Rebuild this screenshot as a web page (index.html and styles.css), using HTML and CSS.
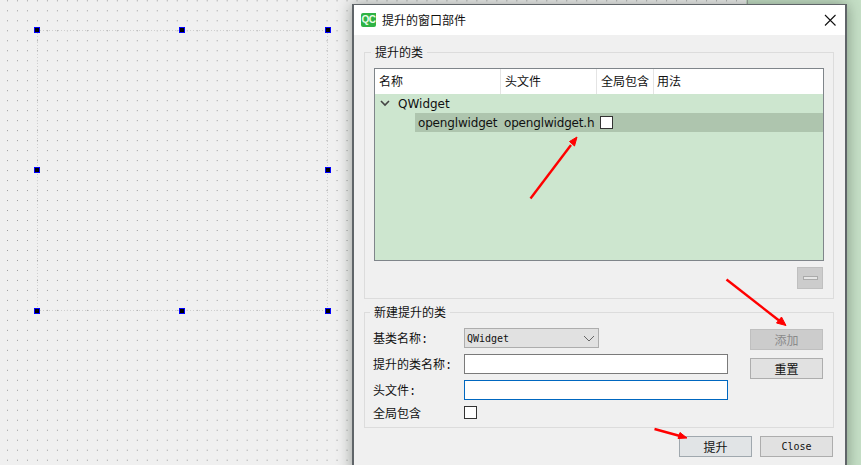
FILE: index.html
```html
<!DOCTYPE html>
<html lang="zh">
<head>
<meta charset="utf-8">
<title>提升的窗口部件</title>
<link rel="stylesheet" href="styles.css">
</head>
<body>
<svg class="canvas" width="748" height="465" viewBox="0 0 748 465" shape-rendering="crispEdges">
  <defs>
    <pattern id="dots" width="10" height="10" patternUnits="userSpaceOnUse" x="7" y="0">
      <rect width="1" height="1" fill="#9a9a9a"/>
    </pattern>
  </defs>
  <rect width="747" height="465" fill="#f0f0f0"/>
  <rect width="747" height="465" fill="url(#dots)"/>
  <g stroke="#cfcfcf" stroke-dasharray="1 2" fill="none">
    <path d="M40 30.5H325M40 310.5H325M37.500 33V308M327.500 33V308"/>
  </g>
  <g fill="#000" stroke="#0000ff">
    <rect x="34.500" y="27.500" width="5" height="5"/>
    <rect x="179.500" y="27.500" width="5" height="5"/>
    <rect x="325.500" y="27.500" width="5" height="5"/>
    <rect x="34.500" y="167.500" width="5" height="5"/>
    <rect x="325.500" y="167.500" width="5" height="5"/>
    <rect x="34.500" y="308.500" width="5" height="5"/>
    <rect x="179.500" y="308.500" width="5" height="5"/>
    <rect x="325.500" y="308.500" width="5" height="5"/>
  </g>
</svg>

<section class="dialog">
  <header class="titlebar">
    <span class="qt-logo">QC</span>
    <span class="title-text">提升的窗口部件</span>
    <svg class="close-icon" width="14" height="14" viewBox="0 0 14 14"><path d="M2 2L12.500 12.500M12.500 2L2 12.500" stroke="#111" stroke-width="1.100" fill="none"/></svg>
  </header>
  <div class="dialog-body">
    <fieldset class="group group-list">
      <legend>提升的类</legend>
      <div class="tree">
        <div class="tree-head">
          <span class="col col-name">名称</span>
          <span class="col col-file">头文件</span>
          <span class="col col-global">全局包含</span>
          <span class="col col-usage">用法</span>
        </div>
        <div class="tree-parent">
          <svg class="chevron" width="10" height="7" viewBox="0 0 10 7"><path d="M1 1L5 5L9 1" stroke="#444" stroke-width="1.600" fill="none"/></svg>
          <span>QWidget</span>
        </div>
        <div class="tree-child">
          <span class="child-name">openglwidget</span>
          <span class="child-file">openglwidget.h</span>
          <span class="check"></span>
        </div>
      </div>
      <div class="remove-row">
        <button class="btn-remove" type="button" aria-label="移除"><span class="minus"></span></button>
      </div>
    </fieldset>

    <fieldset class="group group-new">
      <legend>新建提升的类</legend>
      <div class="new-layout">
        <div class="form">
          <label class="form-label">基类名称:</label>
          <div class="combo"><span>QWidget</span>
            <svg width="12" height="7" viewBox="0 0 12 7"><path d="M1 1L6 6L11 1" stroke="#666" fill="none"/></svg>
          </div>
          <label class="form-label">提升的类名称:</label>
          <div class="input"></div>
          <label class="form-label">头文件:</label>
          <div class="input input-focus"></div>
          <label class="form-label form-label-short">全局包含</label>
          <div class="check-cell"><span class="check"></span></div>
        </div>
        <div class="side-buttons">
          <button class="btn btn-disabled" type="button">添加</button>
          <button class="btn" type="button">重置</button>
        </div>
      </div>
    </fieldset>

    <div class="footer">
      <button class="btn btn-default" type="button">提升</button>
      <button class="btn btn-mono" type="button">Close</button>
    </div>
  </div>
</section>

<svg class="arrows" width="861" height="465" viewBox="0 0 861 465">
  <g stroke="#ff0000" stroke-width="2.400" fill="#ff0000">
    <path d="M530.500 198.500L571 145" fill="none"/>
    <path d="M577 137L569.500 141.500L574.500 146Z" stroke-width="1"/>
    <path d="M726.500 279.500L779 320.500" fill="none"/>
    <path d="M786 325.500L781.500 317L776.500 323Z" stroke-width="1"/>
    <path d="M654.500 429L680 436" fill="none"/>
    <path d="M687 438L680 432.500L678 438.500Z" stroke-width="1"/>
  </g>
</svg>
</body>
</html>
```

FILE: styles.css
```css
* { box-sizing: border-box; }

html, body {
  margin: 0;
  height: 465px;
  overflow: hidden;
}

body {
  position: relative;
  width: 861px;
  background: #c6e0c7;
  font-family: "Noto Sans CJK SC", "Liberation Sans", sans-serif;
  font-size: 12px;
  color: #111;
}

.canvas {
  position: absolute;
  left: 0;
  top: 0;
  border-right: 1px solid #a0a0a0;
}

.arrows {
  position: absolute;
  left: 0;
  top: 0;
  pointer-events: none;
}

.dialog {
  position: absolute;
  left: 352px;
  top: 4px;
  width: 495px;
  height: 470px;
  border: 1px solid #5f6468;
  border-left-width: 2px;
  border-right-width: 2px;
  background: #f0f0f0;
  box-shadow: 0 0 14px rgba(40, 50, 40, 0.45);
}

.titlebar {
  display: flex;
  align-items: center;
  height: 30px;
  padding: 0 8px 0 7px;
  background: #fff;
}

.qt-logo {
  display: block;
  width: 15px;
  height: 14px;
  margin-right: 6px;
  border-radius: 2px 0 2px 2px;
  background: #2fb344;
  color: #e8fbe8;
  font: bold 10px/14px "Liberation Sans", sans-serif;
  letter-spacing: -0.5px;
  text-align: center;
  overflow: hidden;
}

.title-text {
  flex: 1;
  font-size: 12px;
  line-height: 16px;
}

.close-icon {
  display: block;
}

.dialog-body {
  padding: 9px 11px 0 10px;
}

.group {
  margin: 0;
  min-width: 0;
  border: 1px solid #dcdcdc;
  padding: 8px 9px 9px;
}

.group legend {
  margin-left: -3px;
  padding: 0 4px;
  font-size: 12px;
  line-height: 16px;
}

.tree {
  height: 193px;
  border: 1px solid #7f858a;
  background: #cde6cf;
  font-family: "DejaVu Sans", sans-serif;
}

.tree-head {
  display: flex;
  height: 25px;
  background: #fff;
  font-family: "Noto Sans CJK SC", sans-serif;
}

.col {
  padding-left: 4px;
  line-height: 24px;
  border-right: 1px solid #e4e4e4;
}

.col-name { width: 126px; }
.col-file { width: 96px; }
.col-global { width: 57px; }
.col-usage { flex: 1; border-right: 0; padding-left: 3px; }

.tree-parent {
  display: flex;
  align-items: center;
  height: 19px;
  padding-left: 5px;
}

.chevron {
  display: block;
  margin-right: 8px;
}

.tree-child {
  display: flex;
  align-items: center;
  height: 19px;
  margin-left: 40px;
  padding-left: 3px;
  background: #aec5ae;
  letter-spacing: -0.17px;
}

.child-name { width: 86px; }
.child-file { width: 96px; }

.check {
  display: block;
  width: 13px;
  height: 13px;
  border: 1px solid #333;
  background: #fff;
}

.remove-row {
  display: flex;
  justify-content: flex-end;
  margin-top: 6px;
  padding-right: 1px;
}

.btn-remove {
  display: flex;
  align-items: center;
  justify-content: center;
  width: 26px;
  height: 22px;
  padding: 0;
  border: 1px solid #bfbfbf;
  background: #cccccc;
}

.minus {
  display: block;
  width: 15px;
  height: 4px;
  border: 1px solid #aaaaaa;
  background: #e6e6e6;
}

.group-new {
  margin-top: 5px;
  padding: 8px 10px 7px 8px;
}

.new-layout {
  display: flex;
  gap: 22px;
  align-items: flex-start;
}

.form {
  display: grid;
  grid-template-columns: 91px 264px;
  grid-template-rows: 20px 20px 20px 14px;
  row-gap: 6px;
  align-items: start;
}

.form-label {
  height: 20px;
  font-family: "Liberation Mono", "Noto Sans CJK SC", monospace;
  font-size: 12px;
  line-height: 24px;
  white-space: nowrap;
}

.form-label-short {
  height: 14px;
  line-height: 18px;
}

.combo {
  display: flex;
  align-items: center;
  justify-content: space-between;
  width: 135px;
  height: 20px;
  padding: 0 3px 0 2px;
  border: 1px solid #adadad;
  background: #e1e1e1;
  font: 10px "DejaVu Sans Mono", monospace;
}

.input {
  height: 20px;
  border: 1px solid #7a7a7a;
  background: #fff;
}

.input-focus {
  border-color: #0067c0;
}

.check-cell {
  height: 13px;
}

.side-buttons {
  display: flex;
  flex-direction: column;
  gap: 8px;
  padding-top: 1px;
}

.btn {
  display: block;
  width: 73px;
  height: 21px;
  padding: 0;
  border: 1px solid #adadad;
  background: #e1e1e1;
  color: #111;
  font-family: "Noto Sans CJK SC", sans-serif;
  font-size: 12px;
  line-height: 19px;
}

.btn-disabled {
  border-color: #bfbfbf;
  background: #cccccc;
  color: #8a8a8a;
}

.btn-default {
  border-color: #a0a8ae;
  background: #e1e4e6;
}

.btn-mono {
  font: 10px "DejaVu Sans Mono", monospace;
}

.footer {
  display: flex;
  justify-content: flex-end;
  gap: 8px;
  margin-top: 8px;
  padding-right: 1px;
}
```
